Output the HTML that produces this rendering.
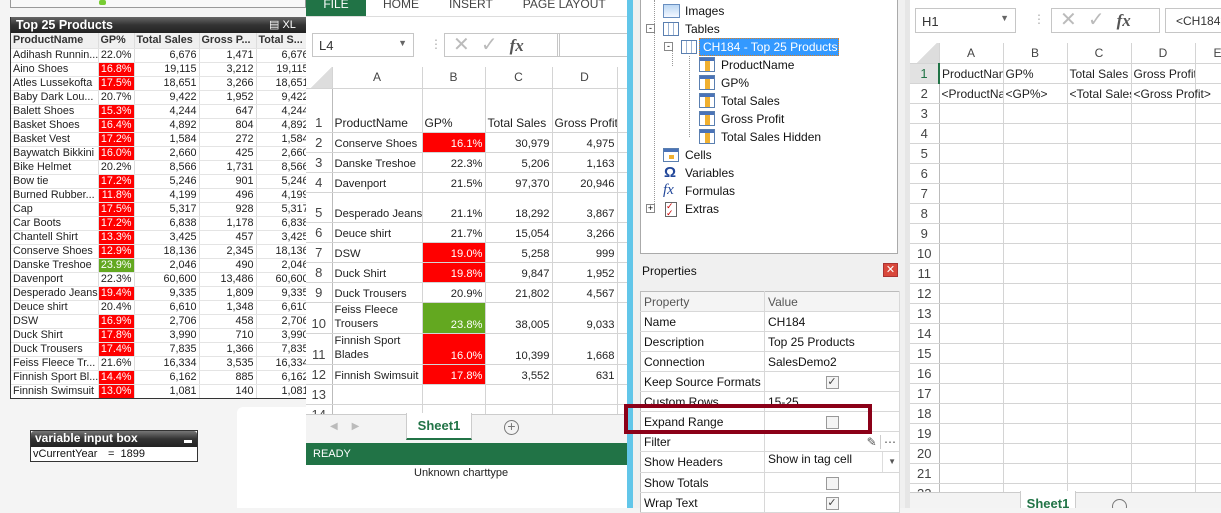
<!DOCTYPE html>
<html><head><meta charset="utf-8"><style>
*{box-sizing:border-box;margin:0;padding:0}
body{width:1221px;height:508px;overflow:hidden;position:relative;background:#f4f4f4;font-family:"Liberation Sans",sans-serif;}
.a{position:absolute}
table{border-collapse:collapse;table-layout:fixed}
#qt td{height:14px;font-size:10.8px;line-height:13px;padding:0 2px;border-right:1px solid #ddd;border-bottom:1px solid #e4e4e4;white-space:nowrap;overflow:hidden;color:#222}
#qt td.n{text-align:right}
#qt td.r{background:#f00;color:#fff;text-align:right}
#qt td.g{background:#63a820;color:#fff;text-align:right}
#qt td.p{text-align:right}
#qt tr.h td{font-weight:bold;background:#f0f0f0;height:15px;color:#333}
.xl td{border-right:1px solid #d4d4d4;border-bottom:1px solid #d4d4d4;font-size:11.2px;color:#222;white-space:nowrap;overflow:hidden;vertical-align:bottom;padding:0 2px 2px}
.xl td.rn{text-align:center;color:#444;background:#fff;border-right:1px solid #bbb;font-size:13px}
.xl td.n{text-align:right}
.xl td.r{background:#f00;color:#fff;text-align:right}
.xl td.g{background:#63a820;color:#fff;text-align:right}
.xl tr.ch td{background:#fff;text-align:center;color:#444;vertical-align:middle;font-size:12px;padding:0}
.tr{position:absolute;font-size:12px;color:#111;white-space:nowrap}
.ic{position:absolute;width:16px;height:14px;border:1px solid #5a7fb0;background:repeating-linear-gradient(90deg,#fff 0 4px,#9cb4d4 4px 5px),#fff}
.ic2{position:absolute;width:16px;height:15px;border:1px solid #5a7fb0;background:linear-gradient(#4a73b8 0 3px,transparent 3px),linear-gradient(90deg,#fff 0 5px,#f0b030 5px 10px,#fff 10px)}
#pg td{height:20px;border-right:1px solid #d8d8d8;border-bottom:1px solid #d8d8d8;font-size:12px;padding:0 3px;color:#111;white-space:nowrap;overflow:hidden;background:#fff}
.cb{display:inline-block;width:13px;height:13px;border:1px solid #999;background:#f4f4f4;vertical-align:middle;font-size:11px;line-height:11px;text-align:center;color:#444}
</style></head><body>
<div class="a" style="left:10px;top:-2px;width:296px;height:10px;border:1px solid #999;background:#f8f8f8"></div>
<div class="a" style="left:99px;top:0;width:7px;height:5px;background:#7c3;border-radius:2px"></div>
<div class="a" style="left:10px;top:17px;width:296px;height:382px;overflow:hidden;background:#fff;border-left:1px solid #333;border-bottom:1px solid #333">
<div style="height:16px;background:linear-gradient(#666,#333 50%,#222);color:#fff;font-weight:bold;font-size:12.5px;padding-left:5px;line-height:16px">Top 25 Products<span style="position:absolute;left:258px;font-weight:normal;font-size:11px">▤ XL</span></div>
<table id="qt" style="width:300px"><colgroup><col style="width:87px"><col style="width:36px"><col style="width:65px"><col style="width:57px"><col style="width:55px"></colgroup>
<tr class="h"><td>ProductName</td><td>GP%</td><td>Total Sales</td><td>Gross P...</td><td>Total S...</td></tr>
<tr><td>Adihash Runnin...</td><td class="p">22.0%</td><td class="n">6,676</td><td class="n">1,471</td><td class="n">6,676</td></tr>
<tr><td>Aino Shoes</td><td class="r">16.8%</td><td class="n">19,115</td><td class="n">3,212</td><td class="n">19,115</td></tr>
<tr><td>Atles Lussekofta</td><td class="r">17.5%</td><td class="n">18,651</td><td class="n">3,266</td><td class="n">18,651</td></tr>
<tr><td>Baby Dark Lou...</td><td class="p">20.7%</td><td class="n">9,422</td><td class="n">1,952</td><td class="n">9,422</td></tr>
<tr><td>Balett Shoes</td><td class="r">15.3%</td><td class="n">4,244</td><td class="n">647</td><td class="n">4,244</td></tr>
<tr><td>Basket Shoes</td><td class="r">16.4%</td><td class="n">4,892</td><td class="n">804</td><td class="n">4,892</td></tr>
<tr><td>Basket Vest</td><td class="r">17.2%</td><td class="n">1,584</td><td class="n">272</td><td class="n">1,584</td></tr>
<tr><td>Baywatch Bikkini</td><td class="r">16.0%</td><td class="n">2,660</td><td class="n">425</td><td class="n">2,660</td></tr>
<tr><td>Bike Helmet</td><td class="p">20.2%</td><td class="n">8,566</td><td class="n">1,731</td><td class="n">8,566</td></tr>
<tr><td>Bow tie</td><td class="r">17.2%</td><td class="n">5,246</td><td class="n">901</td><td class="n">5,246</td></tr>
<tr><td>Burned Rubber...</td><td class="r">11.8%</td><td class="n">4,199</td><td class="n">496</td><td class="n">4,199</td></tr>
<tr><td>Cap</td><td class="r">17.5%</td><td class="n">5,317</td><td class="n">928</td><td class="n">5,317</td></tr>
<tr><td>Car Boots</td><td class="r">17.2%</td><td class="n">6,838</td><td class="n">1,178</td><td class="n">6,838</td></tr>
<tr><td>Chantell Shirt</td><td class="r">13.3%</td><td class="n">3,425</td><td class="n">457</td><td class="n">3,425</td></tr>
<tr><td>Conserve Shoes</td><td class="r">12.9%</td><td class="n">18,136</td><td class="n">2,345</td><td class="n">18,136</td></tr>
<tr><td>Danske Treshoe</td><td class="g">23.9%</td><td class="n">2,046</td><td class="n">490</td><td class="n">2,046</td></tr>
<tr><td>Davenport</td><td class="p">22.3%</td><td class="n">60,600</td><td class="n">13,486</td><td class="n">60,600</td></tr>
<tr><td>Desperado Jeans</td><td class="r">19.4%</td><td class="n">9,335</td><td class="n">1,809</td><td class="n">9,335</td></tr>
<tr><td>Deuce shirt</td><td class="p">20.4%</td><td class="n">6,610</td><td class="n">1,348</td><td class="n">6,610</td></tr>
<tr><td>DSW</td><td class="r">16.9%</td><td class="n">2,706</td><td class="n">458</td><td class="n">2,706</td></tr>
<tr><td>Duck Shirt</td><td class="r">17.8%</td><td class="n">3,990</td><td class="n">710</td><td class="n">3,990</td></tr>
<tr><td>Duck Trousers</td><td class="r">17.4%</td><td class="n">7,835</td><td class="n">1,366</td><td class="n">7,835</td></tr>
<tr><td>Feiss Fleece Tr...</td><td class="p">21.6%</td><td class="n">16,334</td><td class="n">3,535</td><td class="n">16,334</td></tr>
<tr><td>Finnish Sport Bl...</td><td class="r">14.4%</td><td class="n">6,162</td><td class="n">885</td><td class="n">6,162</td></tr>
<tr><td>Finnish Swimsuit</td><td class="r">13.0%</td><td class="n">1,081</td><td class="n">140</td><td class="n">1,081</td></tr>
</table></div>
<div class="a" style="left:30px;top:430px;width:168px;height:32px;border:1px solid #333;background:#fff">
<div style="height:16px;background:linear-gradient(#777,#333 50%,#222);color:#fff;font-weight:bold;font-size:12px;line-height:15px;padding-left:4px;border-radius:3px 3px 0 0">variable input box<span style="position:absolute;right:5px;top:9px;width:8px;height:3px;background:#fff"></span></div>
<div style="font-size:11px;padding-left:2px;line-height:14px;color:#111">vCurrentYear<span style="position:absolute;left:77px">=&nbsp; 1899</span></div></div>
<div class="a" style="left:237px;top:407px;width:392px;height:101px;background:#fff;border-radius:6px 0 0 0"></div>
<div class="a" style="left:306px;top:0;width:321px;height:465px;background:#fff;overflow:hidden">
<div class="a" style="left:0;top:0;width:60px;height:16px;background:#217346;color:#fff;font-size:12px;text-align:center;line-height:9px">FILE</div>
<div class="a" style="left:77px;top:-3px;font-size:12px;color:#444;white-space:nowrap">HOME<span style="margin-left:30px">INSERT</span><span style="margin-left:30px">PAGE LAYOUT</span><span style="margin-left:28px">F</span></div>
<div class="a" style="left:0;top:16px;width:321px;height:50px;background:#fff;border-top:1px solid #ddd"></div>
<div class="a" style="left:6px;top:33px;width:102px;height:24px;border:1px solid #c6c6c6;font-size:13px;padding:4px 0 0 6px;color:#333">L4<span style="position:absolute;right:6px;top:4px;font-size:9px;color:#666">▼</span></div>
<div class="a" style="left:124px;top:37px;color:#aaa;font-size:12px">⋮</div>
<div class="a" style="left:138px;top:33px;width:116px;height:24px;border:1px solid #c6c6c6;color:#bbb;font-size:20px;line-height:22px;padding-left:8px">✕&nbsp;&nbsp;✓<i style="font-family:'Liberation Serif',serif;color:#555;font-weight:bold;margin-left:12px;font-size:17px">fx</i></div>
<div class="a" style="left:251px;top:33px;width:80px;height:24px;border:1px solid #c6c6c6"></div>
<table class="xl a" style="left:0;top:67px;width:332px"><colgroup><col style="width:26px"><col style="width:90px"><col style="width:63px"><col style="width:67px"><col style="width:65px"><col style="width:21px"></colgroup>
<tr class="ch" style="height:21px"><td style="background:linear-gradient(135deg,#fff 55%,#ddd 55%)"></td><td>A</td><td>B</td><td>C</td><td>D</td><td></td></tr>
<tr style="height:44px"><td class="rn">1</td><td style="font-size:12px">ProductName</td><td style="font-size:12px">GP%</td><td style="font-size:12px">Total Sales</td><td style="font-size:12px">Gross Profit</td><td></td></tr>
<tr style="height:20px"><td class="rn">2</td><td>Conserve Shoes</td><td class="r">16.1%</td><td class="n">30,979</td><td class="n">4,975</td><td></td></tr>
<tr style="height:20px"><td class="rn">3</td><td>Danske Treshoe</td><td class="n">22.3%</td><td class="n">5,206</td><td class="n">1,163</td><td></td></tr>
<tr style="height:20px"><td class="rn">4</td><td>Davenport</td><td class="n">21.5%</td><td class="n">97,370</td><td class="n">20,946</td><td></td></tr>
<tr style="height:30px"><td class="rn">5</td><td>Desperado Jeans</td><td class="n">21.1%</td><td class="n">18,292</td><td class="n">3,867</td><td></td></tr>
<tr style="height:20px"><td class="rn">6</td><td>Deuce shirt</td><td class="n">21.7%</td><td class="n">15,054</td><td class="n">3,266</td><td></td></tr>
<tr style="height:20px"><td class="rn">7</td><td>DSW</td><td class="r">19.0%</td><td class="n">5,258</td><td class="n">999</td><td></td></tr>
<tr style="height:20px"><td class="rn">8</td><td>Duck Shirt</td><td class="r">19.8%</td><td class="n">9,847</td><td class="n">1,952</td><td></td></tr>
<tr style="height:20px"><td class="rn">9</td><td>Duck Trousers</td><td class="n">20.9%</td><td class="n">21,802</td><td class="n">4,567</td><td></td></tr>
<tr style="height:30px"><td class="rn">10</td><td style="white-space:normal;line-height:14px">Feiss Fleece Trousers</td><td class="g">23.8%</td><td class="n">38,005</td><td class="n">9,033</td><td></td></tr>
<tr style="height:30px"><td class="rn">11</td><td style="white-space:normal;line-height:14px">Finnish Sport Blades</td><td class="r">16.0%</td><td class="n">10,399</td><td class="n">1,668</td><td></td></tr>
<tr style="height:20px"><td class="rn">12</td><td>Finnish Swimsuit</td><td class="r">17.8%</td><td class="n">3,552</td><td class="n">631</td><td></td></tr>
<tr style="height:20px"><td class="rn">13</td><td></td><td></td><td></td><td></td><td></td></tr>
<tr style="height:20px"><td class="rn">14</td><td></td><td></td><td></td><td></td><td></td></tr>
</table>
<div class="a" style="left:0;top:414px;width:321px;height:29px;background:#f3f3f3;border-top:1px solid #ccc"></div>
<div class="a" style="left:24px;top:421px;color:#bbb;font-size:10px">◀&nbsp;&nbsp;&nbsp;&nbsp;&nbsp;▶</div>
<div class="a" style="left:100px;top:413px;width:66px;height:27px;background:#fff;border:1px solid #ccc;border-top:none;border-bottom:2px solid #217346;color:#217346;font-weight:bold;font-size:13px;text-align:center;line-height:26px">Sheet1</div>
<div class="a" style="left:198px;top:420px;width:15px;height:15px;border:1.5px solid #777;border-radius:50%;color:#777;font-size:14px;line-height:11px;text-align:center">+</div>
<div class="a" style="left:0;top:443px;width:321px;height:22px;background:#217346;color:#fff;font-size:11px;line-height:22px;padding-left:7px">READY</div>
</div>
<div class="a" style="left:414px;top:467px;font-size:11px;color:#222">Unknown charttype</div>
<div class="a" style="left:627px;top:0;width:6px;height:508px;background:#62c6e9"></div>
<div class="a" style="left:633px;top:0;width:272px;height:508px;background:#f0f0f0"></div>
<div class="a" style="left:640px;top:-2px;width:258px;height:256px;background:#fff;border:1px solid #aaa"></div>
<div class="a" style="left:654px;top:0;width:1px;height:210px;border-left:1px dotted #999"></div>
<div class="a" style="left:672px;top:48px;width:1px;height:18px;border-left:1px dotted #999"></div>
<div class="a" style="left:689px;top:56px;width:1px;height:81px;border-left:1px dotted #999"></div>
<div class="a" style="left:663px;top:4px;width:17px;height:14px;border:1px solid #6a8fc0;background:linear-gradient(#bcd8f4,#f4f8ff)"></div>
<div class="tr" style="left:685px;top:4px">Images</div>
<div class="a" style="left:646px;top:24px;width:9px;height:9px;border:1px solid #888;background:#fff;font-size:9px;line-height:6px;text-align:center">-</div>
<div class="ic" style="left:663px;top:22px"></div><div class="tr" style="left:685px;top:22px">Tables</div>
<div class="a" style="left:664px;top:42px;width:9px;height:9px;border:1px solid #888;background:#fff;font-size:9px;line-height:6px;text-align:center">-</div>
<div class="ic" style="left:681px;top:40px"></div>
<div class="a" style="left:699px;top:38px;width:140px;height:18px;background:#3399ff;border:1px dotted #e08020"></div>
<div class="tr" style="left:703px;top:40px;color:#fff">CH184 - Top 25 Products</div>
<div class="ic2" style="left:699px;top:57px"></div><div class="tr" style="left:721px;top:58px">ProductName</div>
<div class="ic2" style="left:699px;top:75px"></div><div class="tr" style="left:721px;top:76px">GP%</div>
<div class="ic2" style="left:699px;top:93px"></div><div class="tr" style="left:721px;top:94px">Total Sales</div>
<div class="ic2" style="left:699px;top:111px"></div><div class="tr" style="left:721px;top:112px">Gross Profit</div>
<div class="ic2" style="left:699px;top:129px"></div><div class="tr" style="left:721px;top:130px">Total Sales Hidden</div>
<div class="a" style="left:663px;top:148px;width:16px;height:14px;border:1px solid #5a7fb0;background:linear-gradient(#4a73b8 0 3px,#fff 3px)"><div style="position:absolute;left:5px;top:6px;width:5px;height:4px;background:#f0b030"></div></div>
<div class="tr" style="left:685px;top:148px">Cells</div>
<div class="tr" style="left:664px;top:164px;font-size:15px;font-weight:bold;color:#23489a">Ω</div><div class="tr" style="left:685px;top:166px">Variables</div>
<div class="tr" style="left:663px;top:182px;font-family:'Liberation Serif',serif;font-style:italic;font-size:15px;color:#23489a">fx</div><div class="tr" style="left:685px;top:184px">Formulas</div>
<div class="a" style="left:646px;top:204px;width:9px;height:9px;border:1px solid #888;background:#fff;font-size:9px;line-height:7px;text-align:center">+</div>
<div class="a" style="left:665px;top:202px;width:12px;height:15px;border:1px solid #666;background:#fff;color:#c00;font-size:9px;line-height:7px">✓<br>✓</div>
<div class="tr" style="left:685px;top:202px">Extras</div>
<div class="tr" style="left:642px;top:264px">Properties</div>
<div class="a" style="left:883px;top:263px;width:15px;height:14px;background:#d9483b;border:1px solid #a33;color:#fff;font-size:11px;line-height:12px;text-align:center">✕</div>
<table id="pg" class="a" style="left:640px;top:291px;width:259px;border:1px solid #bbb"><colgroup><col style="width:124px"><col style="width:135px"></colgroup>
<tr><td style="background:#f4f4f4;color:#555">Property</td><td style="background:#f4f4f4;color:#555">Value</td></tr>
<tr><td>Name</td><td>CH184</td></tr>
<tr><td>Description</td><td>Top 25 Products</td></tr>
<tr><td>Connection</td><td>SalesDemo2</td></tr>
<tr><td>Keep Source Formats</td><td style="text-align:center"><span class="cb">✓</span></td></tr>
<tr><td>Custom Rows</td><td>15-25</td></tr>
<tr><td>Expand Range</td><td style="text-align:center"><span class="cb"></span></td></tr>
<tr><td>Filter</td><td style="text-align:right;padding:0;color:#555">✎ <span style="border-left:1px solid #ccc;padding:0 3px">⋯</span></td></tr>
<tr><td>Show Headers</td><td>Show in tag cell<span style="float:right;font-size:8px;color:#555;border-left:1px solid #ddd;padding-left:5px;line-height:20px">▼</span></td></tr>
<tr><td>Show Totals</td><td style="text-align:center"><span class="cb"></span></td></tr>
<tr><td>Wrap Text</td><td style="text-align:center"><span class="cb">✓</span></td></tr>
</table>
<div class="a" style="left:624px;top:404px;width:248px;height:30px;border:4px solid #8b0018"></div>
<div class="a" style="left:905px;top:0;width:316px;height:508px;background:#fff;border-left:5px solid #e6e6e6;overflow:hidden">
<div class="a" style="left:5px;top:8px;width:101px;height:25px;border:1px solid #c6c6c6;font-size:13px;padding:5px 0 0 6px;color:#333">H1<span style="position:absolute;right:6px;top:4px;font-size:9px;color:#666">▼</span></div>
<div class="a" style="left:123px;top:12px;color:#aaa;font-size:12px">⋮</div>
<div class="a" style="left:141px;top:8px;width:109px;height:25px;border:1px solid #c6c6c6;color:#bbb;font-size:20px;line-height:23px;padding-left:8px">✕&nbsp;&nbsp;✓<i style="font-family:'Liberation Serif',serif;color:#555;font-weight:bold;margin-left:12px;font-size:17px">fx</i></div>
<div class="a" style="left:255px;top:8px;width:80px;height:25px;border:1px solid #c6c6c6;font-size:12px;padding:5px 0 0 10px;color:#333">&lt;CH184&gt;</div>
<table class="xl a" style="left:0;top:43px;width:330px"><colgroup><col style="width:29px"><col style="width:64px"><col style="width:64px"><col style="width:64px"><col style="width:64px"><col style="width:45px"></colgroup>
<tr class="ch" style="height:20px"><td style="background:linear-gradient(135deg,#fff 55%,#ddd 55%)"></td><td>A</td><td>B</td><td>C</td><td>D</td><td>E</td></tr>
<tr style="height:20px"><td class="rn" style="background:#e2e2e2;color:#217346;border-right:2px solid #217346">1</td><td style="font-size:12px">ProductName</td><td style="font-size:12px">GP%</td><td style="font-size:12px">Total Sales</td><td style="font-size:12px">Gross Profit</td><td></td></tr>
<tr style="height:20px"><td class="rn">2</td><td style="font-size:12px">&lt;ProductName&gt;</td><td style="font-size:12px">&lt;GP%&gt;</td><td style="font-size:12px">&lt;Total Sales&gt;</td><td style="font-size:12px;overflow:visible">&lt;Gross Profit&gt;</td><td></td></tr>
<tr style="height:20px"><td class="rn">3</td><td></td><td></td><td></td><td></td><td></td></tr>
<tr style="height:20px"><td class="rn">4</td><td></td><td></td><td></td><td></td><td></td></tr>
<tr style="height:20px"><td class="rn">5</td><td></td><td></td><td></td><td></td><td></td></tr>
<tr style="height:20px"><td class="rn">6</td><td></td><td></td><td></td><td></td><td></td></tr>
<tr style="height:20px"><td class="rn">7</td><td></td><td></td><td></td><td></td><td></td></tr>
<tr style="height:20px"><td class="rn">8</td><td></td><td></td><td></td><td></td><td></td></tr>
<tr style="height:20px"><td class="rn">9</td><td></td><td></td><td></td><td></td><td></td></tr>
<tr style="height:20px"><td class="rn">10</td><td></td><td></td><td></td><td></td><td></td></tr>
<tr style="height:20px"><td class="rn">11</td><td></td><td></td><td></td><td></td><td></td></tr>
<tr style="height:20px"><td class="rn">12</td><td></td><td></td><td></td><td></td><td></td></tr>
<tr style="height:20px"><td class="rn">13</td><td></td><td></td><td></td><td></td><td></td></tr>
<tr style="height:20px"><td class="rn">14</td><td></td><td></td><td></td><td></td><td></td></tr>
<tr style="height:20px"><td class="rn">15</td><td></td><td></td><td></td><td></td><td></td></tr>
<tr style="height:20px"><td class="rn">16</td><td></td><td></td><td></td><td></td><td></td></tr>
<tr style="height:20px"><td class="rn">17</td><td></td><td></td><td></td><td></td><td></td></tr>
<tr style="height:20px"><td class="rn">18</td><td></td><td></td><td></td><td></td><td></td></tr>
<tr style="height:20px"><td class="rn">19</td><td></td><td></td><td></td><td></td><td></td></tr>
<tr style="height:20px"><td class="rn">20</td><td></td><td></td><td></td><td></td><td></td></tr>
<tr style="height:20px"><td class="rn">21</td><td></td><td></td><td></td><td></td><td></td></tr>
<tr style="height:20px"><td class="rn">22</td><td></td><td></td><td></td><td></td><td></td></tr>
</table>
<div class="a" style="left:0;top:492px;width:316px;height:20px;background:#f3f3f3;border-top:1px solid #ccc"></div>
<div class="a" style="left:110px;top:491px;width:56px;height:20px;background:#fff;border:1px solid #ccc;border-top:none;color:#217346;font-weight:bold;font-size:13px;text-align:center;line-height:26px">Sheet1</div>
<div class="a" style="left:202px;top:499px;width:15px;height:15px;border:1.5px solid #777;border-radius:50%"></div>
</div>
</body></html>
